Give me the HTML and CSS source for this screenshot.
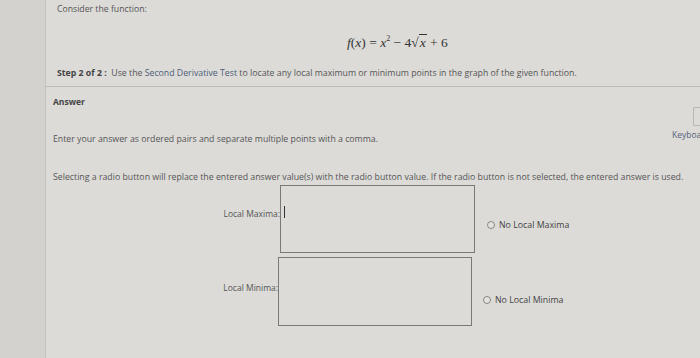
FILE: index.html
```html
<!DOCTYPE html>
<html lang="en">
<head>
    <meta charset="UTF-8">
    <title>Step 2 of 2</title>
    <link rel="stylesheet" href="styles.css">
</head>
<body>
    <div class="page">
        <div class="strip"></div>
        <div class="content">
            <div class="question">
                <p class="consider">Consider the function:</p>
                <p class="formula"><i>f</i>(<i>x</i>) = <i>x</i><sup>2</sup> &minus; 4<span class="root">&radic;<span class="radicand"><i>x</i></span></span> + 6</p>
                <p class="step"><b>Step 2 of 2 :</b>&nbsp; Use the <span class="link">Second Derivative Test</span> to locate any local maximum or minimum points in the graph of the given function.</p>
            </div>
            <div class="answer">
                <div class="answer-head">
                    <h3>Answer</h3>
                    <div class="keyboard">
                        <span class="kbd-box"></span>
                        <span class="kbd-text">Keyboard</span>
                    </div>
                </div>
                <p class="hint">Enter your answer as ordered pairs and separate multiple points with a comma.</p>
                <p class="hint">Selecting a radio button will replace the entered answer value(s) with the radio button value. If the radio button is not selected, the entered answer is used.</p>
                <div class="row row-max">
                    <label class="field-label">Local Maxima:</label>
                    <div class="field"><span class="caret"></span></div>
                    <div class="radio"><span class="dot"></span>No Local Maxima</div>
                </div>
                <div class="row row-min">
                    <label class="field-label">Local Minima:</label>
                    <div class="field"></div>
                    <div class="radio"><span class="dot"></span>No Local Minima</div>
                </div>
            </div>
        </div>
    </div>
</body>
</html>
```
FILE: styles.css
```css
body {
    margin: 0;
    background-color: #dcdbd8;
    font-family: "Open Sans", Arial, sans-serif;
    color: #555;
    overflow: hidden;
}
p {
    margin: 0;
}
.page {
    display: flex;
    width: 700px;
    height: 358px;
}
.strip {
    width: 45px;
    flex-shrink: 0;
    background-color: #d3d2cf;
    border-right: 1px solid #c4c3c0;
}
.content {
    flex: 1;
    min-width: 0;
}
.question {
    padding: 3px 0 0 11px;
    height: 83px;
    border-bottom: 1px solid #bdbcb9;
    font-size: 8.7px;
}
.consider {
    line-height: 12px;
}
.formula {
    margin: 16px 0 0 290px;
    font-family: "Liberation Serif", "Times New Roman", serif;
    font-size: 13.5px;
    line-height: 16px;
    color: #333;
}
.formula sup {
    font-size: 8px;
}
.root {
    white-space: nowrap;
}
.radicand {
    border-top: 1px solid #333;
    padding: 0 1px;
}
.step {
    margin-top: 16px;
    font-size: 8.75px;
    white-space: nowrap;
}
.step b {
    font-weight: 700;
    color: #444;
}
.link {
    color: #4c5b78;
}
.answer {
    padding: 0 0 0 7px;
    font-size: 8.75px;
}
.answer-head {
    display: flex;
    justify-content: space-between;
}
.answer-head h3 {
    margin: 9px 0 0 0;
    font-size: 8.5px;
    font-weight: 700;
    color: #444;
}
.keyboard {
    display: flex;
    flex-direction: column;
    align-items: flex-end;
    width: 28px;
    overflow: hidden;
}
.kbd-box {
    width: 8px;
    height: 17px;
    margin-top: 20px;
    margin-right: -2px;
    border: 1px solid #b8b7b4;
    border-right: none;
    border-radius: 2px 0 0 2px;
}
.kbd-text {
    align-self: flex-start;
    margin-top: 3px;
    font-size: 8.5px;
    color: #55607a;
    white-space: nowrap;
}
.hint {
    margin-top: 0;
    line-height: 12px;
    white-space: nowrap;
}
.answer-head + .hint {
    margin-top: -7px;
}
.hint + .hint {
    margin-top: 26px;
}
.row {
    display: flex;
    align-items: center;
}
.row-max {
    margin-top: 2px;
}
.row-min {
    margin-top: 4px;
}
.field-label {
    width: 227px;
    text-align: right;
    font-size: 8.5px;
    align-self: flex-start;
    margin-top: 23px;
}
.row-min .field-label {
    width: 225px;
    margin-top: 25px;
}
.field {
    width: 193px;
    height: 66px;
    border: 1.5px solid #7a7977;
    position: relative;
}
.row-min .field {
    width: 192px;
    height: 67px;
}
.caret {
    position: absolute;
    left: 3px;
    top: 20px;
    width: 1px;
    height: 12px;
    background-color: #333;
}
.radio {
    display: flex;
    align-items: center;
    margin-left: 12px;
    margin-top: 12px;
    font-size: 8.8px;
    color: #444;
}
.row-min .radio {
    margin-left: 11px;
    margin-top: 16px;
}
.dot {
    width: 6px;
    height: 6px;
    border: 1px solid #888;
    border-radius: 50%;
    margin-right: 4px;
    background-color: #e3e2df;
}
```
